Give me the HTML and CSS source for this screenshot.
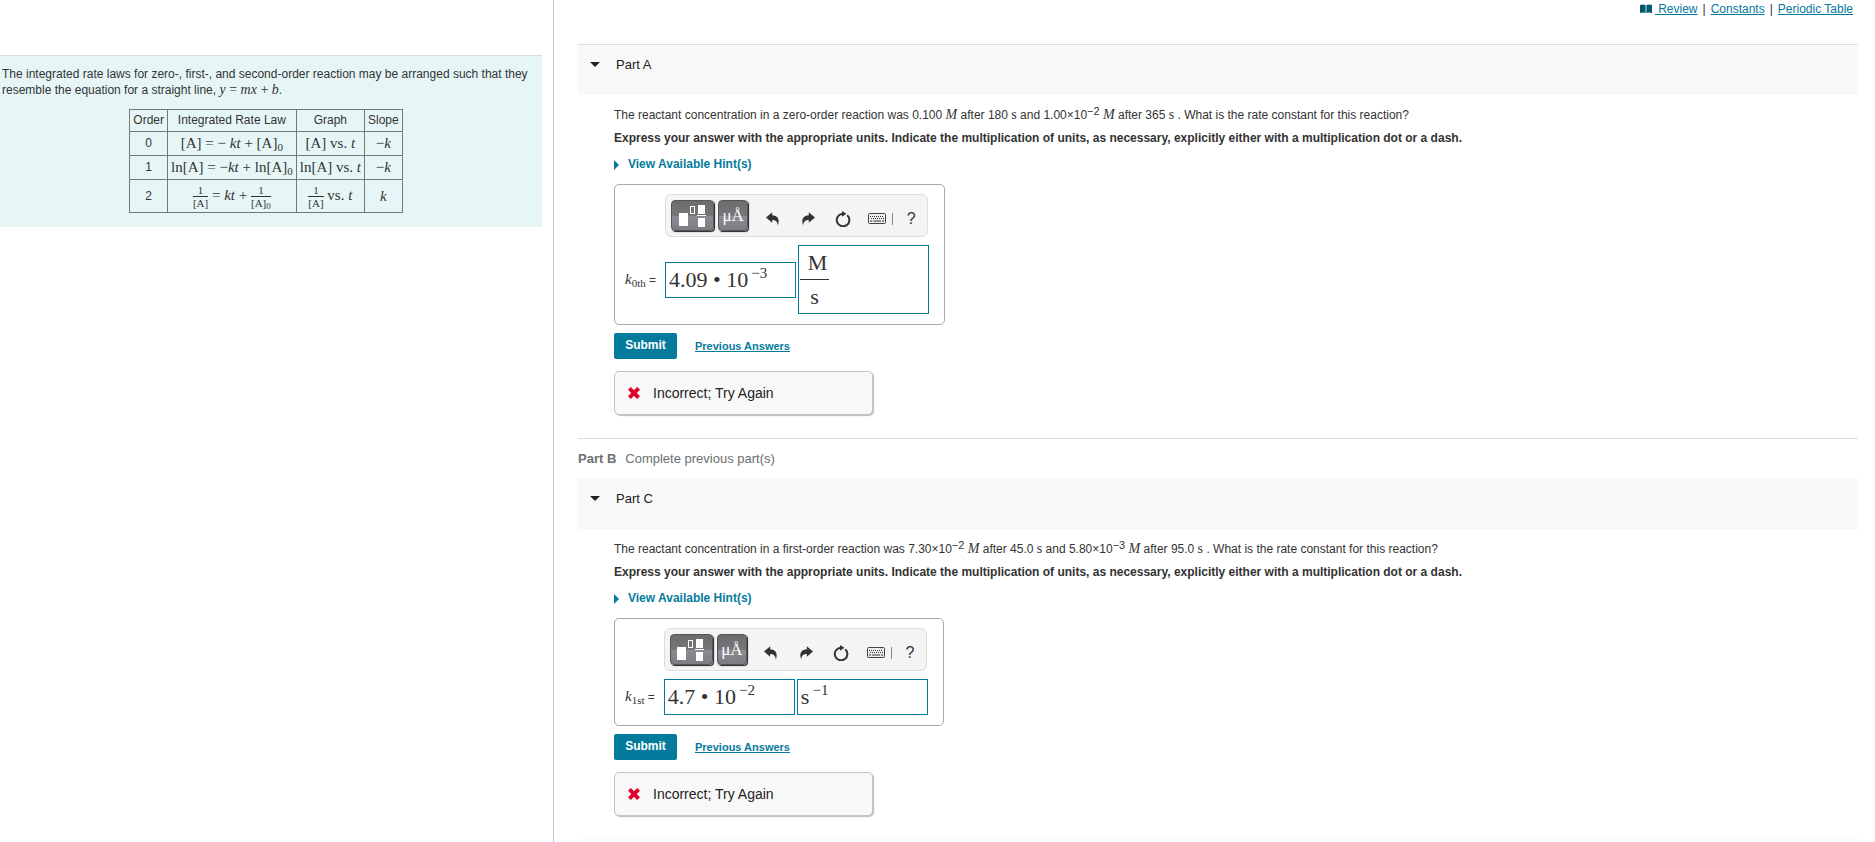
FILE: index.html
```html
<!DOCTYPE html>
<html lang="en">
<head>
  <meta charset="UTF-8">
  <meta name="viewport" content="width=device-width, initial-scale=1.0">
  <title>Integrated Rate Laws</title>
  <link rel="stylesheet" href="styles.css">
</head>
<body>
<svg width="0" height="0" class="sprite" aria-hidden="true">
  <symbol id="icon-template" viewBox="0 0 28 24">
    <rect x="0" y="9" width="9" height="13" fill="#fff"/>
    <rect x="11.5" y="2.5" width="4" height="7" fill="none" stroke="#fff"/>
    <rect x="19" y="1" width="7" height="9" fill="#fff"/>
    <rect x="18" y="11" width="9" height="1" fill="#fff"/>
    <rect x="19" y="14" width="7" height="9" fill="#fff"/>
  </symbol>
  <symbol id="icon-undo" viewBox="0 0 14 14">
    <path d="M0 5.4 6.2 0.2V3.2C11.5 3.4 14.2 7 11.8 13.8 11.6 9.9 10 8.2 6.2 8.1V10.8Z" fill="#333"/>
  </symbol>
  <symbol id="icon-redo" viewBox="0 0 14 14">
    <path d="M14 5.4 7.8 0.2V3.2C2.5 3.4 -0.2 7 2.2 13.8 2.4 9.9 4 8.2 7.8 8.1V10.8Z" fill="#333"/>
  </symbol>
  <symbol id="icon-reset" viewBox="0 0 16 16">
    <path d="M12.2 4.2A6.3 6.3 0 1 1 7.6 2.7" fill="none" stroke="#333" stroke-width="2"/>
    <path d="M7 0 11.4 2.8 7 5.8Z" fill="#333"/>
  </symbol>
  <symbol id="icon-keyboard" viewBox="0 0 18 12">
    <rect x="0.5" y="0.5" width="17" height="10" rx="1" fill="#eee" stroke="#444"/>
    <path d="M2 3.5H16M3 5.5H16" stroke="#333" stroke-width="1" stroke-dasharray="1 1"/>
    <path d="M2 8H4M5 8H13M14 8H16" stroke="#333" stroke-width="1"/>
  </symbol>
  <symbol id="icon-cross" viewBox="0 0 12 12">
    <path d="M1.4 1.4 10.6 10.6M10.6 1.4 1.4 10.6" stroke="#e0002b" stroke-width="4"/>
  </symbol>
  <symbol id="icon-book" viewBox="0 0 12 10">
    <path d="M0 1Q3 0 5.6 1V9Q3 8 0 9ZM6.4 1Q9 0 12 1V9Q9 8 6.4 9Z" fill="#005a70"/>
  </symbol>
</svg>

<div class="page">
  <aside class="sidebar">
    <div class="intro">
      <p>The integrated rate laws for zero-, first-, and second-order reaction may be arranged such that they resemble the equation for a straight line, <span class="math"><i>y</i> = <i>mx</i> + <i>b</i></span>.</p>
      <table class="laws">
        <thead>
          <tr><th>Order</th><th>Integrated Rate Law</th><th>Graph</th><th>Slope</th></tr>
        </thead>
        <tbody>
          <tr>
            <td>0</td>
            <td class="math">[A] = − <i>kt</i> + [A]<sub>0</sub></td>
            <td class="math">[A] vs. <i>t</i></td>
            <td class="math">−<i>k</i></td>
          </tr>
          <tr>
            <td>1</td>
            <td class="math">ln[A] = −<i>kt</i> + ln[A]<sub>0</sub></td>
            <td class="math">ln[A] vs. <i>t</i></td>
            <td class="math">−<i>k</i></td>
          </tr>
          <tr class="tall">
            <td>2</td>
            <td class="math"><span class="frac"><span>1</span><span>[A]</span></span> = <i>kt</i> + <span class="frac"><span>1</span><span>[A]<sub>0</sub></span></span></td>
            <td class="math"><span class="frac"><span>1</span><span>[A]</span></span> vs. <i>t</i></td>
            <td class="math"><i>k</i></td>
          </tr>
        </tbody>
      </table>
    </div>
  </aside>

  <main class="content">
    <nav class="resources">
      <svg class="book" width="12" height="10" aria-hidden="true"><use href="#icon-book"/></svg>
      <a href="#review">&nbsp;Review</a><span>|</span><a href="#constants">Constants</a><span>|</span><a href="#periodic">Periodic Table</a>
    </nav>

    <section class="part">
      <h2 class="part-header lined"><button type="button" aria-expanded="true">Part A</button></h2>
      <div class="part-body">
        <p class="question">The reactant concentration in a zero-order reaction was 0.100 <i class="unit">M</i> after 180 <span class="unit">s</span> and 1.00×10<sup>−2</sup> <i class="unit">M</i> after 365 <span class="unit">s</span> . What is the rate constant for this reaction?</p>
        <p class="instructions">Express your answer with the appropriate units. Indicate the multiplication of units, as necessary, explicitly either with a multiplication dot or a dash.</p>
        <a class="hints" href="#hints-a">View Available Hint(s)</a>

        <div class="answer">
          <div class="toolbar">
            <button type="button" class="key wide" aria-label="Templates"><svg width="28" height="24"><use href="#icon-template"/></svg></button>
            <button type="button" class="key">μÅ</button>
            <button type="button" class="tool" aria-label="Undo"><svg width="14" height="14"><use href="#icon-undo"/></svg></button>
            <button type="button" class="tool" aria-label="Redo"><svg width="14" height="14"><use href="#icon-redo"/></svg></button>
            <button type="button" class="tool" aria-label="Reset"><svg width="16" height="16"><use href="#icon-reset"/></svg></button>
            <button type="button" class="tool keyboard" aria-label="Keyboard shortcuts"><svg width="18" height="12"><use href="#icon-keyboard"/></svg></button>
            <button type="button" class="tool help" aria-label="Help">?</button>
          </div>
          <span class="answer-label" id="label-a"><span class="math"><i>k</i><sub>0th</sub></span> =</span>
          <div class="fields">
            <div class="field" role="textbox" contenteditable="true" spellcheck="false" aria-labelledby="label-a">4.09 • 10<sup>−3</sup></div>
            <div class="field units" role="textbox" contenteditable="true" spellcheck="false" aria-label="Units"><span class="unit-frac"><span>M</span><span>s</span></span></div>
          </div>
        </div>

        <div class="actions">
          <button type="button" class="submit">Submit</button>
          <a href="#previous-a">Previous Answers</a>
        </div>
        <div class="feedback"><svg width="12" height="12" aria-hidden="true"><use href="#icon-cross"/></svg>Incorrect; Try Again</div>
      </div>
    </section>

    <section class="part-locked"><b>Part B</b>Complete previous part(s)</section>

    <section class="part">
      <h2 class="part-header"><button type="button" aria-expanded="true">Part C</button></h2>
      <div class="part-body last">
        <p class="question">The reactant concentration in a first-order reaction was 7.30×10<sup>−2</sup> <i class="unit">M</i> after 45.0 <span class="unit">s</span> and 5.80×10<sup>−3</sup> <i class="unit">M</i> after 95.0 <span class="unit">s</span> . What is the rate constant for this reaction?</p>
        <p class="instructions">Express your answer with the appropriate units. Indicate the multiplication of units, as necessary, explicitly either with a multiplication dot or a dash.</p>
        <a class="hints" href="#hints-c">View Available Hint(s)</a>

        <div class="answer">
          <div class="toolbar">
            <button type="button" class="key wide" aria-label="Templates"><svg width="28" height="24"><use href="#icon-template"/></svg></button>
            <button type="button" class="key">μÅ</button>
            <button type="button" class="tool" aria-label="Undo"><svg width="14" height="14"><use href="#icon-undo"/></svg></button>
            <button type="button" class="tool" aria-label="Redo"><svg width="14" height="14"><use href="#icon-redo"/></svg></button>
            <button type="button" class="tool" aria-label="Reset"><svg width="16" height="16"><use href="#icon-reset"/></svg></button>
            <button type="button" class="tool keyboard" aria-label="Keyboard shortcuts"><svg width="18" height="12"><use href="#icon-keyboard"/></svg></button>
            <button type="button" class="tool help" aria-label="Help">?</button>
          </div>
          <span class="answer-label" id="label-c"><span class="math"><i>k</i><sub>1st</sub></span> =</span>
          <div class="fields">
            <div class="field" role="textbox" contenteditable="true" spellcheck="false" aria-labelledby="label-c">4.7 • 10<sup>−2</sup></div>
            <div class="field" role="textbox" contenteditable="true" spellcheck="false" aria-label="Units">s<sup>−1</sup></div>
          </div>
        </div>

        <div class="actions">
          <button type="button" class="submit">Submit</button>
          <a href="#previous-c">Previous Answers</a>
        </div>
        <div class="feedback"><svg width="12" height="12" aria-hidden="true"><use href="#icon-cross"/></svg>Incorrect; Try Again</div>
      </div>
    </section>
    <div class="part-end"></div>
  </main>
</div>
</body>
</html>
```
FILE: styles.css
```css
* {
    margin: 0;
    padding: 0;
    box-sizing: border-box;
}

body {
    background-color: #fff;
    color: #333;
    font-family: "Liberation Sans", Arial, sans-serif;
    font-size: 12px;
    line-height: 15px;
}

a {
    color: #047a9c;
}

button {
    border: none;
    background: none;
    font: inherit;
    color: inherit;
    cursor: pointer;
}

svg {
    display: block;
}

.sprite {
    position: absolute;
}

.page {
    display: grid;
    grid-template-columns: 554px 1fr;
    min-height: 100vh;
}

/* left panel */
.sidebar {
    padding: 55px 11px 0 0;
    border-right: 1px solid #b9c9d9;
}

.intro {
    padding: 11px 12px 14px 2px;
    border-top: 1px solid #dcdcdc;
    background-color: #e6f6f7;
}

.math,
.unit {
    font-family: "Liberation Serif", "Times New Roman", serif;
}

.math {
    font-size: 15px;
    line-height: 15px;
}

.intro p .math {
    font-size: 14px;
}

.math sub {
    font-size: 11px;
    line-height: 1px;
    vertical-align: -3px;
}

.laws {
    margin: 11px auto 0;
    border-collapse: collapse;
    text-align: center;
}

.laws th,
.laws td {
    height: 24px;
    padding: 0 3px;
    border: 1px solid #777;
    font-weight: normal;
    white-space: nowrap;
}

.laws th {
    height: 22px;
}

.laws .tall td {
    height: 33px;
}

.frac {
    display: inline-flex;
    flex-direction: column;
    vertical-align: middle;
    font-size: 11px;
    line-height: 12px;
}

.frac span:first-child {
    border-bottom: 1px solid #333;
}

.frac sub {
    font-size: 9px;
    vertical-align: -2px;
}

/* right column */
.content {
    padding: 0 17px 0 24px;
}

.resources {
    display: flex;
    align-items: center;
    justify-content: flex-end;
    gap: 5px;
    height: 44px;
    padding: 0 5px 26px 0;
}

.book {
    margin-right: -2px;
}

.part-header {
    height: 51px;
    padding: 13px 12px;
    background-color: #f8f8f8;
    color: #222;
    font-size: 13px;
    font-weight: normal;
}

.part-header.lined {
    padding-top: 12px;
    border-top: 1px solid #dcdcdc;
}

.part-header button {
    display: flex;
    align-items: center;
    gap: 16px;
}

.part-header button::before {
    content: "";
    border: 5px solid transparent;
    border-top-color: #222;
    border-bottom: none;
}

.part-body {
    display: flex;
    flex-direction: column;
    align-items: flex-start;
    padding: 12px 0 23px 36px;
}

.part-body.last {
    padding-bottom: 22px;
}

.question,
.instructions {
    margin-bottom: 8px;
}

.question sup {
    font-size: 11px;
    line-height: 1px;
    vertical-align: 4px;
}

.question .unit {
    font-size: 14px;
    line-height: 15px;
}

.instructions {
    font-weight: bold;
}

.hints {
    display: flex;
    align-items: center;
    gap: 9px;
    margin: 3px 0 12px;
    font-weight: bold;
    text-decoration: none;
}

.hints::before {
    content: "";
    border: 5px solid transparent;
    border-left-color: #047a9c;
    border-right: none;
}

.answer {
    display: grid;
    grid-template-columns: auto auto;
    align-items: center;
    gap: 8px 9px;
    padding: 9px 14px 10px 10px;
    border: 1px solid #a8a8a8;
    border-radius: 5px;
}

.toolbar {
    grid-column: 2;
    display: flex;
    align-items: center;
    height: 43px;
    margin-right: 2px;
    padding: 0 5px;
    border: 1px solid #ddd;
    border-radius: 6px;
    background-color: #f4f4f4;
}

.key {
    display: flex;
    flex-shrink: 0;
    align-items: center;
    justify-content: center;
    width: 30px;
    height: 31px;
    margin-right: 7px;
    border: 1px solid #555;
    border-radius: 4px;
    background: linear-gradient(#6c6c6e, #77777a 50%, #8b8b92 51%, #7c7c82);
    box-shadow: 1px 1px 1px #222;
    color: #fff;
    font-family: "Liberation Serif", serif;
    font-size: 17px;
}

.key.wide {
    width: 43px;
    margin-right: 4px;
}

.tool {
    display: flex;
    flex-shrink: 0;
    justify-content: center;
    width: 35px;
    padding-top: 6px;
}

.tool.keyboard {
    justify-content: flex-start;
    gap: 6px;
    width: 32px;
    margin-left: 8px;
}

.tool.keyboard::after {
    content: "";
    border-right: 1px solid #888;
}

.tool.help {
    width: 22px;
    font-size: 16px;
}

.answer-label .math {
    font-size: 15px;
}

.fields {
    display: flex;
    align-items: center;
    gap: 2px;
}

.field {
    width: 131px;
    height: 36px;
    padding: 0 3px;
    border: 1px solid #047a9c;
    background-color: #fff;
    font-family: "Liberation Serif", "Times New Roman", serif;
    font-size: 22px;
    line-height: 34px;
    white-space: nowrap;
}

.field sup {
    padding-left: 3px;
    font-size: 15px;
    line-height: 1px;
    vertical-align: 9px;
}

.field.units {
    height: 69px;
    padding: 0 1px;
}

.unit-frac {
    display: inline-flex;
    flex-direction: column;
    width: 29px;
    text-align: center;
}

.unit-frac span:first-child {
    padding-left: 6px;
    border-bottom: 1px solid #333;
    line-height: 32px;
}

.actions {
    display: flex;
    align-items: center;
    gap: 18px;
    margin: 8px 0 12px;
    font-size: 11px;
    font-weight: bold;
}

.submit {
    width: 63px;
    height: 26px;
    padding-bottom: 2px;
    border-radius: 2px;
    background-color: #047a9c;
    color: #fff;
    font-size: 12px;
}

.feedback {
    display: flex;
    align-items: center;
    gap: 13px;
    width: 259px;
    height: 44px;
    padding: 0 13px;
    border: 1px solid #c4c4c4;
    border-radius: 5px;
    background-color: #f8f8f8;
    box-shadow: 1px 1px 1px #bbb;
    color: #222;
    font-size: 14px;
}

.part-locked {
    display: flex;
    gap: 9px;
    padding: 12px 0;
    border-top: 1px solid #dcdcdc;
    color: #6a7070;
    font-size: 13px;
}

.part-end {
    border-top: 1px solid #f8f8f8;
}
```
